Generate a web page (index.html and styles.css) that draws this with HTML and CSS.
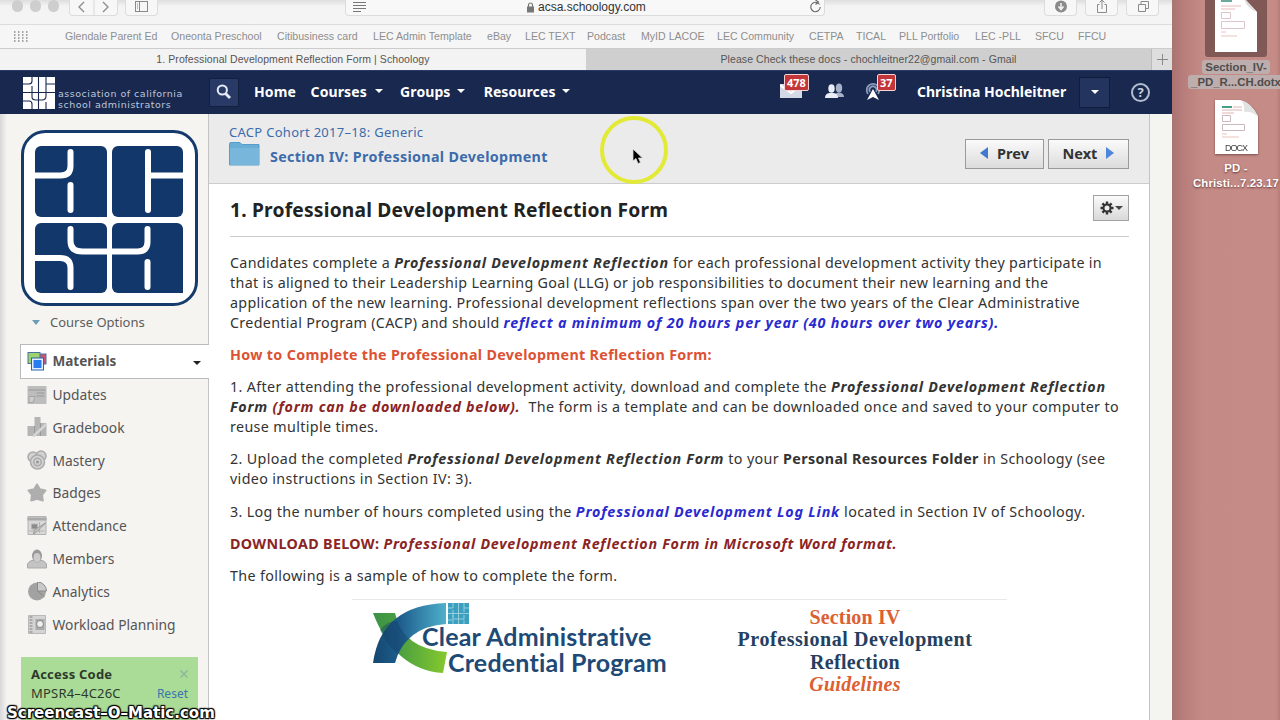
FILE: index.html
```html
<!DOCTYPE html>
<html>
<head>
<meta charset="utf-8">
<title>1. Professional Development Reflection Form | Schoology</title>
<link rel="stylesheet" href="styles.css">
</head>
<body>

<div class="screen">
<div class="window">

  <div class="toolbar">
    <div class="lights"><i></i><i></i><i></i></div>
    <div class="tbtn arrows">
      <svg width="48" height="17" viewBox="0 0 48 17"><path d="M14 2l-5 5 5 5M33 2l5 5-5 5" fill="none" stroke="#8a8a8a" stroke-width="1.3"/><path d="M24 0v16" stroke="#d8d8d8"/></svg>
    </div>
    <div class="tbtn side">
      <svg width="32" height="17" viewBox="0 0 32 17"><rect x="9.500" y="1.500" width="12" height="10" fill="none" stroke="#8a8a8a"/><path d="M13.500 1v11M11 4h1M11 6h1M11 8h1" stroke="#8a8a8a"/></svg>
    </div>
    <div class="address">
      <svg class="reader" width="14" height="12" viewBox="0 0 14 12"><path d="M0 1.500h13M0 4.500h13M0 7.500h13M0 10.500h8" stroke="#777" stroke-width="1.100"/></svg>
      <div class="url"><svg width="9" height="11" viewBox="0 0 9 11"><rect x="1" y="4.500" width="7" height="6" fill="#777"/><path d="M2.500 5V3a2 2 0 0 1 4 0v2" fill="none" stroke="#777" stroke-width="1.200"/></svg><span>acsa.schoology.com</span></div>
      <svg class="reload" width="13" height="13" viewBox="0 0 13 13"><path d="M10.500 4.500A4.700 4.700 0 1 0 11.200 7M6.500 0l3 2-3 2.500" fill="none" stroke="#666" stroke-width="1.100"/></svg>
    </div>
    <div class="tbtn"><svg width="32" height="17" viewBox="0 0 32 17"><circle cx="16" cy="6.500" r="6" fill="#8a8a8a"/><path d="M16 3v5M13.500 6.500l2.500 3 2.500-3" fill="none" stroke="#f4f4f4" stroke-width="1.500"/></svg></div>
    <div class="tbtn"><svg width="32" height="17" viewBox="0 0 32 17"><path d="M13.500 4.500h-2v8h9v-8h-2M16 9V0M13.500 2.500L16 0l2.500 2.500" fill="none" stroke="#8a8a8a"/></svg></div>
    <div class="tbtn"><svg width="32" height="17" viewBox="0 0 32 17"><path d="M11.500 4.500h7v7h-7zM14 4V1.500h7.500v7H19" fill="none" stroke="#8a8a8a"/></svg></div>
  </div>

  <div class="bookmarks">
    <svg width="14" height="11" viewBox="0 0 14 11"><path d="M0 1h14M0 4h14M0 7h14M0 10h14" stroke="#8a8a8a" stroke-width="1.300" stroke-dasharray="1.500 2.500"/></svg>
    <span class="b1">Glendale Parent Ed</span><span class="b2">Oneonta Preschool</span><span class="b3">Citibusiness card</span><span class="b4">LEC Admin Template</span><span class="b5">eBay</span><span class="b6">LEC TEXT</span><span class="b7">Podcast</span><span class="b8">MyID LACOE</span><span class="b9">LEC Community</span><span class="b10">CETPA</span><span class="b11">TICAL</span><span class="b12">PLL Portfolio</span><span class="b13">LEC -PLL</span><span class="b14">SFCU</span><span class="b15">FFCU</span>
  </div>

  <div class="tabs">
    <div class="tab on">1. Professional Development Reflection Form | Schoology</div>
    <div class="tab off">Please Check these docs - chochleitner22@gmail.com - Gmail</div>
    <div class="plus"><svg width="11" height="11" viewBox="0 0 11 11"><path d="M5.500 0v11M0 5.500h11" stroke="#888"/></svg></div>
  </div>

  <div class="nav">
    <div class="brand">
      <svg width="32" height="32" viewBox="0 0 32 32"><rect width="32" height="32" fill="#fff"/><path d="M15.500 0v32M0 15.500h32M0 7h6q3 0 3-3V0M9 9v6M23 0v15M23 7h9M9 16v4q0 3 4 3h6q4 0 4-4v-3M0 24h6q3 0 3 3v5M23 25v7" fill="none" stroke="#18284f" stroke-width="1.100"/></svg>
      <div class="brandtext"><div>association of california</div><div>school administrators</div></div>
    </div>
    <div class="search"><svg width="16" height="16" viewBox="0 0 16 16"><circle cx="6.300" cy="6" r="4.600" fill="none" stroke="#e4ecf8" stroke-width="2"/><path d="M9.500 9.500l4.500 4.500" stroke="#e4ecf8" stroke-width="2.800"/></svg></div>
    <div class="links">
      <a class="n1">Home</a>
      <a class="n2">Courses</a><i class="caret"></i>
      <a class="n3">Groups</a><i class="caret"></i>
      <a class="n4">Resources</a><i class="caret"></i>
    </div>
    <div class="alerts">
      <div class="mail"><svg width="22" height="14" viewBox="0 0 22 14"><rect width="22" height="14" fill="#d3dae5"/><path d="M0 1l11 8 11-8" fill="none" stroke="#fff" stroke-width="2"/></svg><b class="badge m">478</b></div>
      <svg class="people" width="20" height="16" viewBox="0 0 20 16"><g fill="#a5b2ca"><ellipse cx="14" cy="5" rx="3.200" ry="4.500"/><path d="M9 14q0-4 5-4.500 5 .5 5 4.500z"/></g><g fill="#e9eef6"><ellipse cx="6.500" cy="5.500" rx="3.200" ry="4.300"/><path d="M0 15q0-4.500 4.500-5h4q4.500.5 4.500 5z"/></g></svg>
      <div class="signal"><svg width="16" height="19" viewBox="0 0 16 19"><path d="M3 12a6.300 6.300 0 1 1 10 0M5 10a3.600 3.600 0 1 1 6 0" fill="none" stroke="#8b9bb9" stroke-width="1.800"/><path d="M8 7l6 11-6-3-6 3z" fill="#fff"/></svg><b class="badge s">37</b></div>
    </div>
    <a class="user">Christina Hochleitner</a>
    <div class="userbtn"><i class="caret"></i></div>
    <div class="help">?</div>
  </div>

  <div class="page">
    <div class="sidebar">
      <svg class="logo" width="177" height="177" viewBox="0 0 177 177">
        <rect x="1.500" y="1.500" width="174" height="173" rx="23" fill="#fff" stroke="#153a6c" stroke-width="3"/>
        <g fill="#12376b"><rect x="14" y="16" width="72" height="71" rx="6"/><rect x="91" y="16" width="71" height="71" rx="6"/><rect x="14" y="93" width="72" height="70" rx="6"/><rect x="91" y="93" width="71" height="70" rx="6"/></g>
        <path d="M80 80h6v7h-6zM156 157h6v6h-6z" fill="#12376b"/>
        <g fill="none" stroke="#fff" stroke-width="6" stroke-linecap="round"><path d="M49.500 22v14q0 9.500-10 9.500H13M49.500 55v25M127 22v58M127 45.500h37M49.500 99v12q0 10.500 12 10.500h55q10 0 10-10V99M13 128h26q10.500 0 10.500 10v19M126.500 132v25"/></g>
      </svg>
      <div class="options"><i></i><span>Course Options</span></div>
      <div class="item active">
        <svg width="19" height="19" viewBox="0 0 19 19"><rect x="7" y="2" width="11.500" height="10" fill="#c9566f" stroke="#4a6fa5"/><rect x=".5" y=".5" width="12" height="11" fill="#9bd36c" stroke="#4a6fa5"/><rect x="4" y="6" width="12" height="12" fill="#e2efff" stroke="#2d62ae"/><rect x="6" y="8" width="8" height="8" fill="#287cf0"/></svg>
        <span>Materials</span><i class="caret dark"></i>
      </div>
      <div class="item"><svg width="19" height="19" viewBox="0 0 19 19"><path d="M0 1h19v18H0z" fill="#bdbdbd"/><path d="M1 5h17M9 8h8M9 11h8" stroke="#999"/><path d="M1.500 11.500h6l-2 6h-4z" fill="#ccc" stroke="#a5a5a5"/></svg><span>Updates</span></div>
      <div class="item"><svg width="19" height="20" viewBox="0 0 19 20"><path d="M0 9h7V0h6v6h6v13H0z" fill="#b5b5b5"/><path d="M7 9v10M13 6v13" stroke="#999"/><path d="M19 7L7 18l-1 2" fill="none" stroke="#d5d5d5" stroke-width="2.500"/></svg><span>Gradebook</span></div>
      <div class="item"><svg width="20" height="20" viewBox="0 0 20 20"><g fill="#d2d2d2" stroke="#ababab" stroke-width="1.500"><circle cx="6" cy="7" r="5"/><circle cx="14" cy="6" r="5"/><circle cx="10.500" cy="12" r="7"/><circle cx="10.500" cy="12" r="3.700"/></g><circle cx="10.500" cy="12" r="1.500" fill="#999"/></svg><span>Mastery</span></div>
      <div class="item"><svg width="19" height="19" viewBox="0 0 19 19"><path d="M9.500 1.500l2.800 4.700 5.700 1.300-3.500 4.500.8 5.500-5.800-1.800-5.800 1.800.8-5.500L1 7.500l5.700-1.300z" fill="#aeaeae" stroke="#aeaeae" stroke-width="2" stroke-linejoin="round"/></svg><span>Badges</span></div>
      <div class="item"><svg width="19" height="19" viewBox="0 0 19 19"><path d="M.5.500h18v18H.5z" fill="#d8d8d8" stroke="#b3b3b3"/><path d="M0 3h19" stroke="#a9a9a9" stroke-width="3"/><path d="M4 8h6v5H4zM12 6v11M1 15h16" fill="#8b8b8b" stroke="#b4b4b4"/><path d="M18 7l-9 9-3 2 1-4z" fill="#c5c5c5" stroke="#999"/></svg><span>Attendance</span></div>
      <div class="item"><svg width="19" height="20" viewBox="0 0 19 20"><path d="M0 19v-4q2-4 7-4h5q5 0 7 4v4z" fill="#c4c4c4" stroke="#aaa"/><ellipse cx="9.500" cy="7" rx="5" ry="6.500" fill="#999"/><ellipse cx="9.500" cy="8.500" rx="3.500" ry="4.500" fill="#ccc"/></svg><span>Members</span></div>
      <div class="item"><svg width="19" height="19" viewBox="0 0 19 19"><circle cx="9.500" cy="9.500" r="9" fill="#a2a2a2"/><path d="M10 9V0a9 9 0 0 1 9 9zM10 9l7 6" fill="#c9c9c9" stroke="#8a8a8a"/></svg><span>Analytics</span></div>
      <div class="item"><svg width="19" height="19" viewBox="0 0 19 19"><path d="M1 .5h17v18H1z" fill="#d4d4d4" stroke="#b8b8b8"/><path d="M3.500 1v18" stroke="#aaa" stroke-width="3" stroke-dasharray="2 1"/><rect x="8" y="4" width="9" height="11" fill="#aaa"/><circle cx="12.500" cy="9" r="3.500" fill="#eee" stroke="#888"/></svg><span>Workload Planning</span></div>
      <div class="access">
        <div class="row"><b>Access Code</b><svg width="8" height="8" viewBox="0 0 8 8"><path d="M.5.500l7 7M7.500.500l-7 7" stroke="#8eb89b" stroke-width="1.500"/></svg></div>
        <div class="row"><span>MPSR4–4C26C</span><a>Reset</a></div>
      </div>
    </div>

    <div class="main">
      <div class="crumbs">
        <div>
          <div class="course">CACP Cohort 2017–18: Generic</div>
          <div class="folder"><svg width="31" height="24" viewBox="0 0 31 24"><path d="M.5 23V2q0-1.500 1.500-1.500h9l2 2h17v20.500z" fill="#6baed5" stroke="#559dca"/><path d="M1 6h29v17H1z" fill="#78b7db"/></svg><b>Section IV: Professional Development</b></div>
        </div>
        <div class="pager"><div class="btn"><i class="l"></i><b>Prev</b></div><div class="btn next"><b>Next</b><i class="r"></i></div></div>
      </div>
      <div class="content">
        <div class="head">
          <h1>1. Professional Development Reflection Form</h1>
          <div class="gear"><svg width="23" height="14" viewBox="0 0 23 14"><g stroke="#333" stroke-width="2.400"><path d="M7 .5v13M.5 7h13M2.400 2.400l9.200 9.200M11.600 2.400l-9.200 9.200"/></g><circle cx="7" cy="7" r="3.500" fill="#eee" stroke="#333" stroke-width="2"/><path d="M15 5h8l-4 4z" fill="#444"/></svg></div>
        </div>
        <p class="intro">Candidates complete a <b><em>Professional Development Reflection</em></b> for each professional development activity they participate in<br>that is aligned to their Leadership Learning Goal (LLG) or job responsibilities to document their new learning and the<br>application of the new learning. Professional development reflections span over the two years of the Clear Administrative<br>Credential Program (CACP) and should <b class="blue"><em class="wide">reflect a minimum of 20 hours per year (40 hours over two years).</em></b></p>
        <p class="intro"><b class="orange">How to Complete the Professional Development Reflection Form:</b></p>
        <p>1. After attending the professional development activity, download and complete the <b><em>Professional Development Reflection</em></b><br><b><em>Form <span class="red">(form can be downloaded below).</span></em></b>&nbsp; The form is a template and can be downloaded once and saved to your computer to<br>reuse multiple times.</p>
        <p>2. Upload the completed <b><em>Professional Development Reflection Form</em></b> to your <b>Personal Resources Folder</b> in Schoology (see<br>video instructions in Section IV: 3).</p>
        <p>3. Log the number of hours completed using the <b class="blue"><em class="wide">Professional Development Log Link</em></b> located in Section IV of Schoology.</p>
        <p><b class="red">DOWNLOAD BELOW: <em>Professional Development Reflection Form in Microsoft Word format.</em></b></p>
        <p>The following is a sample of how to complete the form.</p>
        <div class="sample">
          <div class="program">
            <svg width="98" height="72" viewBox="0 0 98 72">
              <defs><linearGradient id="arc"><stop offset="0" stop-color="#14486f"/><stop offset=".35" stop-color="#1d5b8c"/><stop offset="1" stop-color="#4eb0cb"/></linearGradient><linearGradient id="leaf"><stop offset="0" stop-color="#3b9147"/><stop offset=".35" stop-color="#4b9f41"/><stop offset="1" stop-color="#86c92d"/></linearGradient></defs>
              <path d="M0 10h22Q30 46 74 49L70 70Q22 67 0 10z" fill="url(#leaf)"/>
              <path d="M0 60Q8 2 73 0v21Q32 24 22 60z" fill="url(#arc)"/>
              <path d="M24 18Q29 29 36 36Q28 43 25 51Q14 42 7 27Q14 18 24 18z" fill="#123f62" opacity=".4"/>
              <rect x="75" y="0" width="21" height="21" fill="#3d9fc0"/>
              <path d="M85.500 0v21M75 10.500h21M75 5h5V0M80 7v7M91 0v9M91 5h5M80 12v4h11v-4M75 17h5v4M91 17v4" fill="none" stroke="#a7dae6" stroke-width=".8"/>
            </svg>
            <div class="ptext"><div class="p1">Clear Administrative</div><div class="p2">Credential Program</div></div>
          </div>
          <div class="guide"><div class="o g1">Section IV</div><div class="g2">Professional Development</div><div class="g3">Reflection</div><div class="o g4"><em>Guidelines</em></div></div>
        </div>
      </div>
    </div>
    <div class="gutter"></div>
  </div>
</div>

<div class="desktop">
  <div class="file sel">
    <div class="thumb"><svg width="42" height="54" viewBox="0 0 42 54"><path d="M0 0h29l13 14v40H0z" fill="#fff"/><path d="M29 0q2 10 13 14z" fill="#ddd"/><path d="M6 3h11" stroke="#6ba99b" stroke-width="2"/><path d="M6 8h20M6 11h14" stroke="#eababa"/><path d="M6.500 14.500h9v6h-9zM6.500 23.500h23v7h-23z" fill="none" stroke="#ddc6ca"/><path d="M6 34h5M6 38h16" stroke="#edc3c3"/></svg></div>
    <div class="name"><span>Section_IV-</span><br><span>_PD_R...CH.dotx</span></div>
  </div>
  <div class="file">
    <svg class="doc" width="43" height="54" viewBox="0 0 43 54"><path d="M0 0h25q10 2 18 16v38H0z" fill="#fff"/><path d="M26 0q4 5 3 12 8-1 14 5Q38 4 26 0z" fill="#e2e2e2"/><path d="M7 7h10" stroke="#459e86" stroke-width="2"/><path d="M18 7h9M7 10h20M7 13h12" stroke="#e1b2b2"/><path d="M7.500 15.500h8v6h-8zM7.500 24.500h22v6h-22z" fill="none" stroke="#ccb9c0"/><path d="M7 34h5M7 37h17" stroke="#edc3c3"/><text x="21.500" y="51" text-anchor="middle" textLength="23" class="ext">DOCX</text></svg>
    <div class="name white"><span>PD -</span><br><span>Christi...7.23.17</span></div>
  </div>
</div>
</div>

<div class="ring"></div>
<svg class="cursor" width="13" height="18" viewBox="0 0 13 18"><path d="M1 1v12l3-2.500 2 5 2.500-1-2-4.500h4z" fill="#000" stroke="#ddd" stroke-width=".8"/></svg>
<div class="watermark">Screencast–O–Matic.com</div>

</body>
</html>
```
FILE: styles.css
```css
body
{
  margin: 0;
  width: 1280px;
  height: 720px;
  overflow: hidden;
  position: relative;
  font-family: "Noto Sans", "Open Sans", sans-serif;
  color: #333;
}
* { box-sizing: border-box; }
svg { display: block; flex: none; }
span, a, h1 { white-space: nowrap; }

.screen { display: flex; height: 720px; }
.window { width: 1172px; flex: none; background: #f5f4f1; }

/* browser chrome */
.toolbar
{
  height: 25px;
  display: flex;
  align-items: flex-start;
  padding-left: 12px;
  background: linear-gradient(#dedede, #f3f3f3 6px, #f5f5f5);
  border-bottom: 1px solid #ddd;
}
.lights { display: flex; gap: 7px; margin-right: 10px; }
.lights i { width: 11px; height: 12px; border-radius: 6px; background: #cecece; }
.tbtn
{
  width: 33px;
  height: 16px;
  margin-right: 8px;
  border: 1px solid #dcdcdc;
  border-top: 0;
  border-radius: 0 0 4px 4px;
  background: #f7f7f7;
}
.tbtn.arrows { width: 49px; margin-right: 7px; }
.tbtn.side { margin-right: 187px; }
.address
{
  width: 480px;
  height: 16px;
  display: flex;
  padding: 0 2px 0 7px;
  margin-right: 219px;
  border: 1px solid #dcdcdc;
  border-top: 0;
  border-radius: 0 0 4px 4px;
  background: #f8f8f8;
}
.reader { margin-top: 1px; }
.url
{
  display: flex;
  align-items: center;
  gap: 3px;
  height: 14px;
  margin-left: 159px;
  margin-right: auto;
  font: 12px "Liberation Sans", sans-serif;
  color: #333;
}
.bookmarks
{
  height: 24px;
  display: flex;
  align-items: center;
  padding: 0 0 1px 14px;
  background: #f6f6f6;
  border-bottom: 1px solid #ccc;
  font: 10.600px "Liberation Sans", sans-serif;
  color: #8e8e8e;
}
.bookmarks span { flex: none; }
.bookmarks .b1 { width: 106px; margin-left: 37px; }
.b2 { width: 106px; }
.b3 { width: 96px; }
.b4 { width: 114px; }
.b5 { width: 38px; }
.b6 { width: 62px; }
.b7 { width: 54px; }
.b8 { width: 76px; }
.b9 { width: 92px; }
.b10 { width: 47px; }
.b11 { width: 43px; }
.b12 { width: 76px; }
.b13 { width: 60px; }
.b14 { width: 43px; }

.tabs { display: flex; height: 21px; font: 10.500px/21px "Liberation Sans", sans-serif; letter-spacing: 0.080px; color: #555; text-align: center; }
.tab.on { width: 586px; background: #f3f3f3; }
.tab.off { width: 565px; background: #cfcfcf; }
.plus { width: 21px; background: #dedede; display: flex; align-items: center; justify-content: center; border-left: 1px solid #bbb; }

/* schoology bar */
.nav
{
  height: 44px;
  display: flex;
  align-items: center;
  padding: 0 0 3px 23px;
  background: #18284f;
  border-top: 1px solid #293b66;
  color: #fff;
  font-size: 14px;
  font-weight: bold;
}
.brand { display: flex; align-items: center; width: 186px; gap: 3px; padding-top: 3px; }
.brandtext { font: 9.500px/11px "DejaVu Sans", sans-serif; color: #bcc7da; padding-top: 12px; letter-spacing: 0.500px; white-space: nowrap; }
.search
{
  width: 30px;
  height: 29px;
  display: flex;
  align-items: center;
  justify-content: center;
  margin-top: 2px;
  border: 1px solid #12203f;
  background: #2a3a66;
}
.links { display: flex; align-items: center; width: 316px; margin-left: 15px; letter-spacing: 0.100px; }
.n1 { width: 57px; }
.n2 { width: 65px; }
.n3 { width: 57px; margin-left: 17px; }
.n4 { width: 79px; margin-left: 19px; }
.caret { flex: none; border: 4px solid transparent; border-top-color: #fff; border-bottom: 0; }
.caret.dark { border-top-color: #222; }
.alerts { display: flex; align-items: center; width: 347px; padding-left: 210px; height: 41px; }
.mail { position: relative; width: 45px; }
.people { margin-right: 20px; }
.signal { position: relative; }
.badge
{
  position: absolute;
  height: 17px;
  background: #c23538;
  border: 1px solid #f4d4d4;
  border-radius: 2px;
  font: bold 11px/15px "Noto Sans", sans-serif;
  padding: 0 2px;
}
.badge.m { left: 4px; top: -10px; }
.badge.s { left: 12px; top: -8px; }
.user { width: 162px; }
.userbtn { width: 31px; height: 31px; margin-top: 2px; background: #23345f; border: 1px solid #101c3c; display: flex; align-items: center; justify-content: center; }
.help { width: 19px; height: 19px; margin: 3px 0 0 21px; border: 2px solid #b3bdd0; border-radius: 10px; font-size: 13px; line-height: 15px; text-align: center; color: #c9d1df; }

/* course menu */
.page { display: flex; height: 606px; }
.sidebar { width: 209px; flex: none; border-right: 1px solid #c4c4c8; background: linear-gradient(90deg, #d8d8da, #f5f4f1 7px); }
.logo { margin: 16px 0 0 21px; }
.options { display: flex; align-items: center; height: 37px; padding: 0 0 7px 32px; font-size: 13px; color: #5c5c5c; }
.options i { border: 4px solid transparent; border-top: 5px solid #6d9cb9; border-bottom: 0; margin-right: 10px; }
.item { display: flex; align-items: center; height: 32.850px; padding-left: 27px; font-size: 13.800px; color: #555; }
.item svg { margin-right: 5.500px; width: 20px; }
.item.active { height: 35px; margin: 0 -1px -1px 20px; padding: 0 8px 1px 6px; border: 1px solid #b9b9be; border-right: 0; background: #fff; font-size: 13.500px; font-weight: bold; }
.item.active .caret { margin: 3px 0 0 auto; }
.access { width: 177px; height: 66px; margin: 16px 0 0 21px; padding: 8px 10px; background: #abdc97; font-size: 13px; line-height: 19px; letter-spacing: 0.200px; color: #2b3a2b; }
.row { display: flex; justify-content: space-between; align-items: center; }
.row a { color: #3a74ad; font-size: 12px; letter-spacing: 0; }

/* page body */
.main { width: 941px; height: 606px; border-right: 1px solid #c4c4c4; background: #fff; }
.crumbs { display: flex; justify-content: space-between; height: 70px; padding: 10px 20px 0; background: #ebebeb; border-bottom: 1px solid #ccc; color: #3c6cab; }
.course { font-size: 13px; line-height: 17px; letter-spacing: 0.290px; }
.folder { display: flex; align-items: center; gap: 10px; font-size: 14.300px; letter-spacing: 0.330px; height: 25px; }
.folder b { padding-top: 6px; }
.pager { display: flex; gap: 4px; padding-top: 15px; }
.btn { width: 79px; height: 30px; display: flex; align-items: center; justify-content: center; gap: 9px; padding-bottom: 2px; border: 1px solid #9a9a9a; background: linear-gradient(#fafafa, #dcdcdc); color: #333; font-size: 14.500px; }
.btn.next { width: 81px; }
.btn i { border: 6px solid transparent; }
.btn .l { border-right: 8px solid #3f79d0; border-left: 0; }
.btn .r { border-left: 8px solid #4e86dc; border-right: 0; }
.content { padding: 0 20px 0 21px; }
.head { height: 53px; display: flex; justify-content: space-between; align-items: center; border-bottom: 1px solid #ccc; margin-bottom: 15.500px; }
h1 { font-size: 19.200px; letter-spacing: 0.210px; margin: 0; padding-bottom: 1px; color: #222; }
.gear { width: 36px; height: 26px; border: 1px solid #a2a2a2; background: linear-gradient(#fafafa, #d9d9d9); display: flex; align-items: center; justify-content: center; margin-bottom: 4px; }
p { margin: 0 0 12.300px; font-size: 14.300px; line-height: 20px; letter-spacing: 0.350px; white-space: nowrap; color: #333; }
p.intro { letter-spacing: 0.320px; }
p em { letter-spacing: 0.740px; }
p em.wide { letter-spacing: 0.830px; }
.blue { color: #2a2ad0; }
.orange { color: #dc5233; }
.red { color: #8b2424; }
.red em { letter-spacing: 0.730px; }
.sample { display: flex; width: 655px; height: 118px; margin: 0 0 0 122px; border-top: 1px solid #e8e8e8; }
.program { display: flex; width: 382px; padding: 3px 0 0 21px; }
.ptext { font: bold 25px/26px Lato, "Open Sans", sans-serif; font-variant-ligatures: none; letter-spacing: 0.200px; color: #204a75; margin-left: -49px; padding-top: 20px; white-space: nowrap; }
.p2 { margin-left: 26px; }
.guide { width: 242px; padding-top: 6px; text-align: center; white-space: nowrap; font: bold 20px/22.500px "Liberation Serif", serif; color: #25405f; }
.guide .o { color: #dc6031; }
.g1 { letter-spacing: 0.150px; }
.g2 { letter-spacing: 0.570px; }
.g3 { letter-spacing: 0.350px; }
.g4 { letter-spacing: 0.250px; }
.gutter { width: 22px; background: #f4f4f1; }

/* desktop behind the window */
.desktop { width: 108px; background: linear-gradient(90deg, #a97371, #b97e7b 12px, #c48a85 30px, #c58b86 104px, #b57d79); overflow: hidden; }
.file { display: flex; flex-direction: column; align-items: center; width: 128px; }
.thumb { width: 62px; height: 57px; display: flex; justify-content: center; padding-top: 0; background: #805856; border-radius: 0 0 3px 3px; }
.thumb svg { margin-top: -2px; }
.name { font: bold 11.400px/14.500px "Liberation Sans", sans-serif; text-align: center; margin-top: 3px; color: #4d4d4d; }
.sel .name span { background: #bdadac; border-radius: 3px; padding: 1px 3px; }
.doc { margin-top: 11px; filter: drop-shadow(0 1px 1px #7b4d4b); }
.ext { font: 9px "Liberation Sans", sans-serif; fill: #444; }
.name.white { color: #fff; text-shadow: 0 1px 2px #633; margin-top: 7px; letter-spacing: 0.150px; }

/* pointer highlight and recorder mark sit over the page */
.ring { position: absolute; left: 600px; top: 116px; width: 68px; height: 68px; border: 4px solid #e2ea35; border-radius: 34px; }
.cursor { position: absolute; left: 632px; top: 148px; }
.watermark { position: absolute; left: 7px; top: 704px; font: bold 15px/18px "DejaVu Sans", sans-serif; color: #fff; white-space: nowrap; text-shadow: 0 0 2px #000, 1px 1px 1px #000, -1px -1px 1px #000, 1px -1px 1px #000, -1px 1px 1px #000; }
```
